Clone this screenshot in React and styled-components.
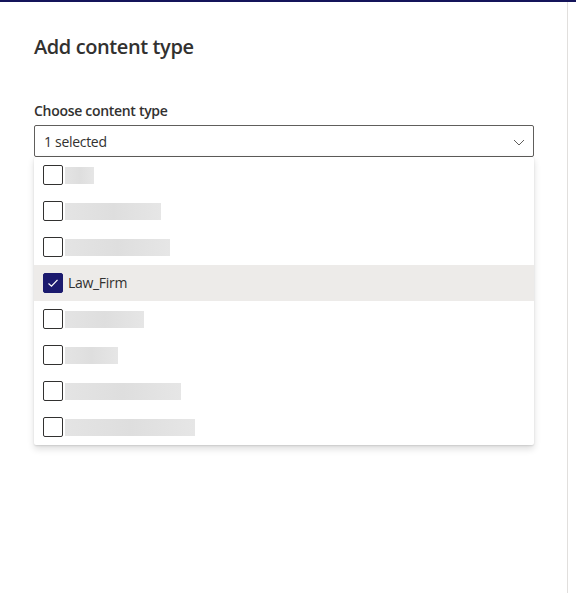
import styled, { createGlobalStyle } from "styled-components";

const options = [
    { id: 1, label: "", blur: 29, checked: false },
    { id: 2, label: "", blur: 96, checked: false },
    { id: 3, label: "", blur: 105, checked: false },
    { id: 4, label: "Law_Firm", checked: true },
    { id: 5, label: "", blur: 79, checked: false },
    { id: 6, label: "", blur: 53, checked: false },
    { id: 7, label: "", blur: 116, checked: false },
    { id: 8, label: "", blur: 130, checked: false },
];

const GlobalStyle = createGlobalStyle`
    html, body {
        margin: 0;
        padding: 0;
        background: #ffffff;
    }
    body {
        font-family: "Open Sans", "Noto Sans", "Liberation Sans", sans-serif;
        color: #323130;
        letter-spacing: -0.3px;
    }
`;

const App = () => {
    return (
        <>
            <GlobalStyle />
            <Page>
                <TopBar />
                <Body>
                    <Panel>
                        <Title>Add content type</Title>
                        <Field>
                            <Label>Choose content type</Label>
                            <Select>
                                <span>1 selected</span>
                                <svg width="12" height="12" viewBox="0 0 12 12">
                                    <path d="M1 4 L6 9 L11 4" fill="none" stroke="#605e5c" strokeWidth="1" />
                                </svg>
                            </Select>
                            <Menu>
                                {options.map((option) => {
                                    const { id, label, blur, checked } = option;
                                    return (
                                        <Option key={id} $selected={checked}>
                                            <Box $checked={checked}>
                                                {checked && (
                                                    <svg width="12" height="12" viewBox="0 0 12 12">
                                                        <path d="M1.5 6.5 L4.5 9.2 L10.5 2.8" fill="none" stroke="#ffffff" strokeWidth="1.2" />
                                                    </svg>
                                                )}
                                            </Box>
                                            {label ? <OptionText>{label}</OptionText> : <Redacted $w={blur} />}
                                        </Option>
                                    );
                                })}
                            </Menu>
                        </Field>
                    </Panel>
                    <Gutter />
                </Body>
            </Page>
        </>
    );
};

const Page = styled.div`
    width: 576px;
    height: 593px;
    display: flex;
    flex-direction: column;
    overflow: hidden;
`;

const TopBar = styled.div`
    height: 2px;
    background: #14145a;
    flex-shrink: 0;
`;

const Body = styled.div`
    flex: 1;
    display: flex;
`;

const Panel = styled.section`
    width: 568px;
    box-sizing: border-box;
    border-right: 1px solid #e1dfdd;
    padding: 31px 34px 0 34px;
`;

const Gutter = styled.div`
    flex: 1;
`;

const Title = styled.h2`
    margin: 0;
    font-size: 20px;
    font-weight: 600;
    line-height: 28px;
    letter-spacing: -0.4px;
    color: #323130;
`;

const Field = styled.div`
    margin-top: 40px;
    width: 500px;
`;

const Label = styled.div`
    font-size: 14px;
    font-weight: 600;
    line-height: 20px;
    padding-bottom: 4px;
`;

const Select = styled.div`
    height: 32px;
    box-sizing: border-box;
    border: 1px solid #605e5c;
    border-radius: 2px;
    display: flex;
    align-items: center;
    justify-content: space-between;
    padding: 0 8px 0 9px;
    font-size: 14px;

    svg {
        margin-top: 1px;
    }
`;

const Menu = styled.div`
    background: #ffffff;
    box-shadow: 0 3.2px 7.2px rgba(0, 0, 0, 0.132), 0 0.6px 1.8px rgba(0, 0, 0, 0.108);
    border-radius: 2px;
`;

const Option = styled.div`
    height: 36px;
    display: flex;
    align-items: center;
    padding-left: 9px;
    gap: 2px;
    background: ${({ $selected }) => ($selected ? "#edebe9" : "transparent")};
`;

const Box = styled.span`
    width: 20px;
    height: 20px;
    box-sizing: border-box;
    border-radius: 2px;
    border: 1px solid ${({ $checked }) => ($checked ? "#1b1a6e" : "#323130")};
    background: ${({ $checked }) => ($checked ? "#1b1a6e" : "#ffffff")};
    display: grid;
    place-items: center;
`;

const OptionText = styled.span`
    font-size: 14px;
    line-height: 20px;
    margin-left: 3px;
`;

const Redacted = styled.span`
    width: ${({ $w }) => $w}px;
    height: 17px;
    background: linear-gradient(90deg, #e4e4e4, #dedede 50%, #e6e6e6);
`;

export default App;
